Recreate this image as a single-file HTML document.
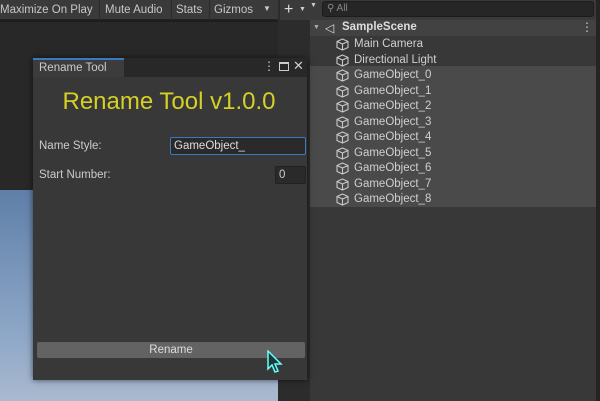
<!DOCTYPE html>
<html><head><style>
*{margin:0;padding:0;box-sizing:border-box}
body{width:600px;height:401px;overflow:hidden;background:#282828;font-family:"Liberation Sans",sans-serif;position:relative;color:#d2d2d2}
.a{position:absolute}
.t{font-size:11.5px;white-space:nowrap}
.row{position:absolute;left:336px;width:250px;height:16px;font-size:11.5px;color:#d0d0d0;line-height:16px;white-space:nowrap}
.row svg{position:absolute;left:0;top:2px}
.row span{position:absolute;left:18px;white-space:nowrap}
</style></head><body>
<div class="a" style="left:0;top:0;width:280px;height:20px;background:#3a3a3a;border-bottom:1px solid #222"></div>
<div class="a t" style="left:0;top:4px;color:#c8c8c8">Maximize On Play</div>
<div class="a" style="left:99px;top:0;width:1px;height:20px;background:#2a2a2a"></div>
<div class="a t" style="left:105px;top:4px;color:#c8c8c8">Mute Audio</div>
<div class="a" style="left:171px;top:0;width:1px;height:20px;background:#2a2a2a"></div>
<div class="a t" style="left:176px;top:4px;color:#c8c8c8">Stats</div>
<div class="a" style="left:209px;top:0;width:1px;height:20px;background:#2a2a2a"></div>
<div class="a t" style="left:214px;top:4px;color:#c8c8c8">Gizmos</div>
<div class="a" style="left:263px;top:4px;font-size:8px;color:#c8c8c8">▼</div>
<div class="a" style="left:0;top:190px;width:278px;height:211px;background:linear-gradient(#5f7fa8,#8fa8c8 70%,#aab9cf)"></div>
<div class="a" style="left:0;top:20px;width:278px;height:2px;background:#1e1e1e"></div>
<div class="a" style="left:278px;top:0;width:322px;height:401px;background:#2c2c2c"></div>
<div class="a" style="left:280px;top:0;width:320px;height:20px;background:#3a3a3a"></div>
<div class="a" style="left:284px;top:2px;font-size:16px;color:#ddd;line-height:16px">+</div>
<div class="a" style="left:299px;top:6px;font-size:7px;color:#ccc">▼</div>
<div class="a" style="left:310px;top:2px;width:4px;font-size:7px;color:#ccc">▼</div>
<div class="a" style="left:322px;top:1px;width:272px;height:16px;background:#262626;border-radius:3px;border:1px solid #1c1c1c"></div>
<div class="a t" style="left:327px;top:3px;font-size:10px;color:#888">⚲ All</div>
<div class="a" style="left:310px;top:20px;width:286px;height:381px;background:#383838"></div>
<div class="a" style="left:310px;top:20px;width:286px;height:16px;background:#424242"></div>
<div class="a" style="left:310px;top:66px;width:286px;height:141px;background:#4a4a4a"></div>
<div class="a" style="left:596px;top:0;width:4px;height:401px;background:#242424"></div>
<div class="a" style="left:313px;top:24px;font-size:7px;color:#aaa">▼</div>
<div class="a" style="left:325px;top:21px;font-size:12px;color:#ddd">◁</div>
<div class="a" style="left:342px;top:21px;font-size:11.5px;font-weight:bold;color:#ddd">SampleScene</div>
<div class="a" style="left:581px;top:20px;font-size:12px;color:#ccc">⋮</div>
<div id="rows"></div>
<div class="a" style="left:33px;top:58px;width:274px;height:322px;background:#383838;box-shadow:0 0 6px rgba(0,0,0,.6)"></div>
<div class="a" style="left:33px;top:58px;width:274px;height:19px;background:#282828"></div>
<div class="a" style="left:33px;top:58px;width:91px;height:19px;background:#3c3c3c;border-top:2px solid #3a79bb"></div>
<div class="a t" style="left:39px;top:62px;color:#ccc">Rename Tool</div>
<div class="a" style="left:263px;top:59px;font-size:12px;color:#ccc">⋮</div>
<div class="a" style="left:279px;top:62px;width:10px;height:9px;border:1.5px solid #ccc;border-top-width:2.5px"></div>
<div class="a" style="left:293px;top:58px;font-size:13px;color:#ccc">✕</div>
<div class="a" style="left:34px;top:88px;width:270px;text-align:center;font-size:24px;color:#d4d025;white-space:nowrap">Rename Tool v1.0.0</div>
<div class="a t" style="left:39px;top:140px;color:#ccc">Name Style:</div>
<div class="a" style="left:170px;top:137px;width:136px;height:18px;background:#2a2a2a;border:1px solid #3a79bb;border-radius:2px"></div>
<div class="a t" style="left:174px;top:140px;color:#ddd">GameObject_</div>
<div class="a t" style="left:39px;top:169px;color:#ccc">Start Number:</div>
<div class="a" style="left:275px;top:166px;width:31px;height:18px;background:#2a2a2a;border:1px solid #222;border-radius:2px"></div>
<div class="a t" style="left:279px;top:169px;color:#ccc">0</div>
<div class="a" style="left:37px;top:342px;width:268px;height:16px;background:#636363;border-radius:2px"></div>
<div class="a t" style="left:37px;top:344px;width:268px;text-align:center;color:#ddd">Rename</div>
<svg class="a" style="left:266px;top:350px" width="20" height="24" viewBox="0 0 20 24"><path d="M2 1 L2 19 L6 15 L9 22 L12 21 L9 14 L15 14 Z" fill="#1a3a3a" stroke="#6ff" stroke-width="1.5"/></svg>
<script>
var names=["Main Camera","Directional Light"];for(var i=0;i<9;i++)names.push("GameObject_"+i);
var h="";names.forEach(function(n,i){h+='<div class="row" style="top:'+(36+i*15.5)+'px"><svg width="13" height="13" viewBox="0 0 13 13" fill="none" stroke="#c8c8c8" stroke-width="1.1"><path d="M6.5 1L12 3.5V9.5L6.5 12L1 9.5V3.5Z M1 3.5L6.5 6L12 3.5 M6.5 6V12"/></svg><span>'+n+'</span></div>'});
document.getElementById("rows").innerHTML=h;
</script>
</body></html>
